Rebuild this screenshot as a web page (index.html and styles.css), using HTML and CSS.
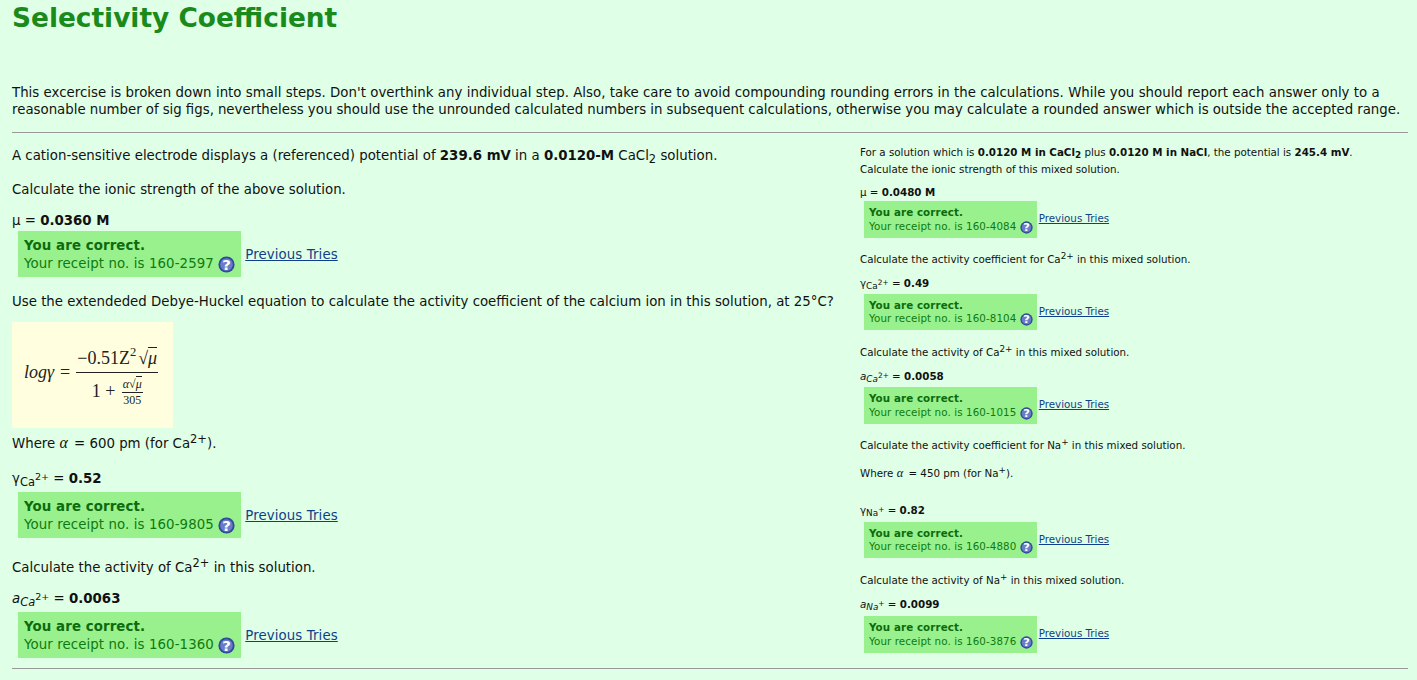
FILE: index.html
```html
<!DOCTYPE html>
<html lang="en">
<head>
<meta charset="utf-8">
<title>Selectivity Coefficient</title>
<link rel="stylesheet" href="styles.css">
</head>
<body>
<h1 class="title">Selectivity Coefficient</h1>
<p class="intro"><span class="intro-a">This excercise is broken down into small steps. Don't overthink any individual step. Also, take care to avoid compounding rounding errors in the calculations. While you should report each answer only to a</span> <span class="intro-b">reasonable number of sig figs, nevertheless you should use the unrounded calculated numbers in subsequent calculations, otherwise you may calculate a rounded answer which is outside the accepted range.</span></p>
<hr class="rule rule-top">
<main class="columns">
<section class="col col-left">
<p class="line">A cation-sensitive electrode displays a (referenced) potential of <b>239.6 mV</b> in a <b>0.0120-M</b> CaCl<sub>2</sub> solution.</p>
<p class="line gap-34">Calculate the ionic strength of the above solution.</p>
<p class="line gap-31">μ = <b>0.0360 M</b></p>
<div class="answer"><div class="box"><b>You are correct.</b><br>Your receipt no. is 160-2597 <svg class="help" viewBox="0 0 16 16"><circle cx="8" cy="8" r="7.6" fill="#2f4a9a"/><circle cx="8" cy="8" r="5.9" fill="#6a7cc8"/><text x="8" y="12.8" class="help-q">?</text></svg></div><a href="#" class="tries">Previous Tries</a></div>
<p class="line gap-use">Use the extendeded Debye-Huckel equation to calculate the activity coefficient of the calcium ion in this solution, at 25°C?</p>
<div class="formula">
<span class="log">logγ</span><span class="eq">=</span>
<span class="frac"><span class="num">−0.51Z<sup>2</sup><span class="rad">√<span class="radi">μ</span></span></span><span class="den">1 + <span class="frac small"><span class="num"><i>α</i><span class="rad">√<span class="radi">μ</span></span></span><span class="den">305</span></span></span></span>
</div>
<p class="line gap-where">Where <i class="alpha">α</i> = 600 pm (for Ca<sup>2+</sup>).</p>
<p class="line gap-35 tall-3">γ<sub>Ca</sub><sup class="tight">2+</sup> = <b>0.52</b></p>
<div class="answer"><div class="box"><b>You are correct.</b><br>Your receipt no. is 160-9805 <svg class="help" viewBox="0 0 16 16"><circle cx="8" cy="8" r="7.6" fill="#2f4a9a"/><circle cx="8" cy="8" r="5.9" fill="#6a7cc8"/><text x="8" y="12.8" class="help-q">?</text></svg></div><a href="#" class="tries">Previous Tries</a></div>
<p class="line gap-act">Calculate the activity of Ca<sup>2+</sup> in this solution.</p>
<p class="line gap-31 tall-3"><i>a</i><sub><i>Ca</i></sub><sup class="tight">2+</sup> = <b>0.0063</b></p>
<div class="answer"><div class="box"><b>You are correct.</b><br>Your receipt no. is 160-1360 <svg class="help" viewBox="0 0 16 16"><circle cx="8" cy="8" r="7.6" fill="#2f4a9a"/><circle cx="8" cy="8" r="5.9" fill="#6a7cc8"/><text x="8" y="12.8" class="help-q">?</text></svg></div><a href="#" class="tries">Previous Tries</a></div>
</section>
<section class="col col-right">
<p class="line">For a solution which is <b>0.0120 M in CaCl<sub>2</sub></b> plus <b>0.0120 M in NaCl</b>, the potential is <b>245.4 mV</b>.<br>Calculate the ionic strength of this mixed solution.</p>
<p class="line gap-r23">μ = <b>0.0480 M</b></p>
<div class="answer"><div class="box"><b>You are correct.</b><br>Your receipt no. is 160-4084 <svg class="help" viewBox="0 0 16 16"><circle cx="8" cy="8" r="7.6" fill="#2f4a9a"/><circle cx="8" cy="8" r="5.9" fill="#6a7cc8"/><text x="8" y="12.8" class="help-q">?</text></svg></div><a href="#" class="tries">Previous Tries</a></div>
<p class="line gap-r-first">Calculate the activity coefficient for Ca<sup>2+</sup> in this mixed solution.</p>
<p class="line gap-r24 tall-2">γ<sub>Ca</sub><sup class="tight">2+</sup> = <b>0.49</b></p>
<div class="answer"><div class="box"><b>You are correct.</b><br>Your receipt no. is 160-8104 <svg class="help" viewBox="0 0 16 16"><circle cx="8" cy="8" r="7.6" fill="#2f4a9a"/><circle cx="8" cy="8" r="5.9" fill="#6a7cc8"/><text x="8" y="12.8" class="help-q">?</text></svg></div><a href="#" class="tries">Previous Tries</a></div>
<p class="line gap-r-q">Calculate the activity of Ca<sup>2+</sup> in this mixed solution.</p>
<p class="line gap-r24 tall-2"><i>a</i><sub><i>Ca</i></sub><sup class="tight">2+</sup> = <b>0.0058</b></p>
<div class="answer"><div class="box"><b>You are correct.</b><br>Your receipt no. is 160-1015 <svg class="help" viewBox="0 0 16 16"><circle cx="8" cy="8" r="7.6" fill="#2f4a9a"/><circle cx="8" cy="8" r="5.9" fill="#6a7cc8"/><text x="8" y="12.8" class="help-q">?</text></svg></div><a href="#" class="tries">Previous Tries</a></div>
<p class="line gap-r-first">Calculate the activity coefficient for Na<sup>+</sup> in this mixed solution.</p>
<p class="line gap-r28">Where <i class="alpha">α</i> = 450 pm (for Na<sup>+</sup>).</p>
<p class="line gap-r37 tall-3">γ<sub>Na</sub><sup class="tight">+</sup> = <b>0.82</b></p>
<div class="answer"><div class="box"><b>You are correct.</b><br>Your receipt no. is 160-4880 <svg class="help" viewBox="0 0 16 16"><circle cx="8" cy="8" r="7.6" fill="#2f4a9a"/><circle cx="8" cy="8" r="5.9" fill="#6a7cc8"/><text x="8" y="12.8" class="help-q">?</text></svg></div><a href="#" class="tries">Previous Tries</a></div>
<p class="line gap-r-q">Calculate the activity of Na<sup>+</sup> in this mixed solution.</p>
<p class="line gap-r24 tall-3"><i>a</i><sub><i>Na</i></sub><sup class="tight">+</sup> = <b>0.0099</b></p>
<div class="answer"><div class="box"><b>You are correct.</b><br>Your receipt no. is 160-3876 <svg class="help" viewBox="0 0 16 16"><circle cx="8" cy="8" r="7.6" fill="#2f4a9a"/><circle cx="8" cy="8" r="5.9" fill="#6a7cc8"/><text x="8" y="12.8" class="help-q">?</text></svg></div><a href="#" class="tries">Previous Tries</a></div>
</section>
</main>
<hr class="rule rule-bottom">
</body>
</html>
```
FILE: styles.css
```css
html, body { margin: 0; padding: 0; }
body {
  background: #dfffe7;
  color: #111;
  font-family: "DejaVu Sans", Verdana, sans-serif;
  font-size: 13.33px;
  line-height: 17px;
  padding: 0 9px 0 12px;
  overflow: hidden;
}
.title { margin: 0; font-size: 26.4px; line-height: 36px; font-weight: 700; color: #1a8a1a; }
.intro { margin: 48px 0 0; }
.intro-a { word-spacing: 0.14px; }
.intro-b { word-spacing: -0.18px; }
.rule { border: 0; border-top: 1px solid #999; margin: 0; height: 1px; }
.rule-top { margin-top: 14px; }
.rule-bottom { margin-top: 10px; }
.columns { display: flex; margin-top: 10px; }
.col-left { width: 848px; flex: none; padding-top: 3px; }
.col-right { font-size: 10.3px; line-height: 17px; }
.line { margin: 0; }
sub, sup { line-height: 0; font-size: 0.86em; }
sub { vertical-align: -0.25em; }
sup { vertical-align: 0.4em; }
sub + sup.tight { vertical-align: 0.3em; font-size: 0.72em; }
.alpha { font-family: "Liberation Serif", serif; font-size: 1.2em; margin-right: 2px; }
.tall-3 { padding-bottom: 3px; }
.tall-2 { padding-bottom: 2px; }
.gap-34 { margin-top: 17px; }
.gap-31 { margin-top: 14px; }
.gap-use { margin-top: 16px; }
.gap-where { margin-top: 6px; }
.gap-35 { margin-top: 18px; }
.gap-act { margin-top: 21px; }
.gap-r23 { margin-top: 6px; }
.gap-r24 { margin-top: 7px; }
.gap-r28 { margin-top: 11px; }
.gap-r37 { margin-top: 20px; }
.gap-r-q { margin-top: 14px; }
.gap-r-first { margin-top: 13px; }
.answer { display: flex; align-items: flex-start; margin: 2px 0 0 6px; }
.box { background: #98f18d; color: #0f7a0f; padding: 6px 6px 4px 6px; line-height: 18px; letter-spacing: 0.1px; }
.box b { color: #0d6b0d; }
.help { width: 17px; height: 17px; vertical-align: -5px; }
.help-q { fill: #fff; font: 700 14px "DejaVu Sans", sans-serif; text-anchor: middle; }
.tries { color: #0f3f88; margin: 15px 0 0 4px; letter-spacing: 0.1px; }
.col-right .box { padding: 5px 4px 4px 5px; line-height: 13.5px; }
.col-right .tries { margin: 9px 0 0 2px; letter-spacing: 0; }
.col-right .help { width: 13px; height: 13px; vertical-align: -4px; }
.col-right .answer { margin: 0 0 0 4px; }
.formula { background: #ffffdf; margin-top: 12px; width: 161px; height: 106px; display: flex; align-items: center; box-sizing: border-box; padding: 0 0 0 12px; gap: 6px; font-family: "Liberation Serif", serif; font-size: 18px; color: #222; letter-spacing: 0; }
.log, .eq { margin-bottom: 6px; }
.log { font-style: italic; }
.frac { display: inline-flex; flex-direction: column; align-items: center; margin-top: 2px; }
.frac > .num { border-bottom: 1px solid #222; padding: 1px 1px 2px; line-height: 24px; white-space: nowrap; }
.frac > .den { padding-top: 2px; white-space: nowrap; line-height: 32px; }
.formula sup { font-size: 0.7em; vertical-align: 0.6em; margin-right: 2px; }
.frac .small { font-size: 12px; vertical-align: middle; margin: 0 0 0 2px; }
.frac .small .num { line-height: 13px; padding: 0 1px 1px; }
.frac .small .den { line-height: 13px; padding-top: 1px; }
.radi { border-top: 1px solid #222; font-style: italic; }
```
